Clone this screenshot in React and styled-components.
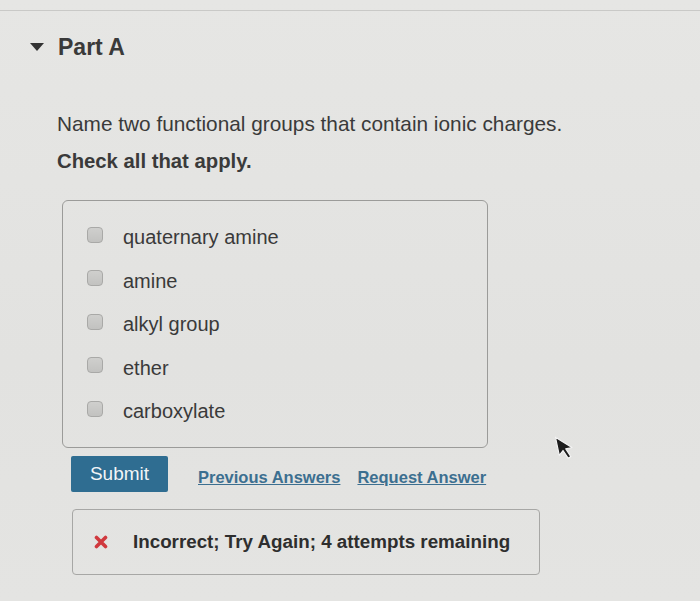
import styled, { createGlobalStyle } from "styled-components";

const options = [
  "quaternary amine",
  "amine",
  "alkyl group",
  "ether",
  "carboxylate",
];

export default function App() {
  return (
    <>
      <GlobalStyle />
      <Page>
        <TopRule />
        <PartHeader>
          <Caret />
          <PartTitle>Part A</PartTitle>
        </PartHeader>
        <Content>
          <Question>Name two functional groups that contain ionic charges.</Question>
          <Instruction>Check all that apply.</Instruction>
          <OptionBox>
            {options.map((label) => (
              <OptionRow key={label}>
                <CheckBox />
                <OptionLabel>{label}</OptionLabel>
              </OptionRow>
            ))}
          </OptionBox>
          <Actions>
            <SubmitButton>Submit</SubmitButton>
            <ActionLink>Previous Answers</ActionLink>
            <ActionLink>Request Answer</ActionLink>
          </Actions>
          <Feedback>
            <WrongMark>
              <svg width="14" height="14" viewBox="0 0 14 14">
                <path
                  d="M2.5 2.5 L11.5 11.5 M11.5 2.5 L2.5 11.5"
                  stroke="#d0393e"
                  strokeWidth="3.6"
                  strokeLinecap="round"
                />
              </svg>
            </WrongMark>
            <FeedbackText>Incorrect; Try Again; 4 attempts remaining</FeedbackText>
          </Feedback>
        </Content>
        <Pointer>
          <svg width="19" height="28" viewBox="0 0 16 24">
            <path
              d="M1 1 L1 17 L5 13.5 L8 21 L10.5 20 L7.6 12.6 L13 12.6 Z"
              fill="#1e1e1e"
              stroke="#f4f4f4"
              strokeWidth="1"
              strokeLinejoin="round"
            />
          </svg>
        </Pointer>
      </Page>
    </>
  );
}

const GlobalStyle = createGlobalStyle`
  body {
    margin: 0;
    background: #e3e3e1;
    font-family: "Liberation Sans", Arial, sans-serif;
    color: #333;
  }
`;

const Page = styled.div`
  position: relative;
  width: 700px;
  height: 601px;
  overflow: hidden;
  padding-top: 10px;
  box-sizing: border-box;
  background: linear-gradient(180deg, #e6e6e4 0%, #e2e2e0 60%, #e4e4e2 100%);
`;

const TopRule = styled.div`
  border-top: 1px solid #c9c9c7;
`;

const PartHeader = styled.div`
  display: flex;
  align-items: center;
  height: 26px;
  margin-top: 23px;
  padding-left: 30px;
`;

const Caret = styled.span`
  width: 0;
  height: 0;
  border-left: 7px solid transparent;
  border-right: 7px solid transparent;
  border-top: 8px solid #333;
  margin-right: 14px;
`;

const PartTitle = styled.h2`
  margin: 0;
  font-size: 23px;
  font-weight: 700;
  color: #3a3a3a;
`;

const Content = styled.div`
  padding-left: 57px;
`;

const Question = styled.p`
  margin: 51px 0 0;
  font-size: 20.8px;
  line-height: 26px;
  color: #3a3a3a;
`;

const Instruction = styled.p`
  margin: 11px 0 0;
  font-size: 20.3px;
  line-height: 26px;
  font-weight: 700;
  color: #3a3a3a;
`;

const OptionBox = styled.div`
  width: 426px;
  margin: 26px 0 0 5px;
  padding: 15px 0 13px 24px;
  border: 1px solid #9b9b99;
  border-radius: 6px;
  box-sizing: border-box;
`;

const OptionRow = styled.label`
  display: flex;
  align-items: center;
  height: 43.5px;
`;

const CheckBox = styled.span`
  width: 16px;
  height: 16px;
  margin-top: -6px;
  border: 1px solid #a9a9a7;
  border-radius: 4px;
  background: linear-gradient(180deg, #cfcfcd, #c2c2c0);
  box-sizing: border-box;
`;

const OptionLabel = styled.span`
  margin-left: 20px;
  font-size: 20px;
  color: #3a3a3a;
`;

const Actions = styled.div`
  display: flex;
  align-items: center;
  gap: 30px;
  margin: 8px 0 0 14px;
`;

const SubmitButton = styled.button`
  width: 97px;
  height: 36px;
  border: none;
  border-radius: 2px;
  background: #2f6d91;
  color: #f2f5f7;
  font-family: "Liberation Sans", Arial, sans-serif;
  font-size: 19px;
`;

const ActionLink = styled.a`
  margin-top: 8px;
  font-size: 16.5px;
  font-weight: 700;
  color: #3c6f90;
  text-decoration: underline;
  &:last-child {
    margin-left: -13px;
  }
`;

const Feedback = styled.div`
  display: flex;
  align-items: center;
  width: 468px;
  height: 66px;
  margin: 17px 0 0 15px;
  padding-left: 21px;
  border: 1px solid #a7a7a5;
  border-radius: 4px;
  box-sizing: border-box;
`;

const WrongMark = styled.span`
  display: flex;
  margin-right: 25px;
`;

const FeedbackText = styled.span`
  font-size: 18.8px;
  font-weight: 700;
  color: #2e2e2e;
`;

const Pointer = styled.div`
  position: absolute;
  left: 557px;
  top: 434px;
  transform: rotate(-12deg);
`;
